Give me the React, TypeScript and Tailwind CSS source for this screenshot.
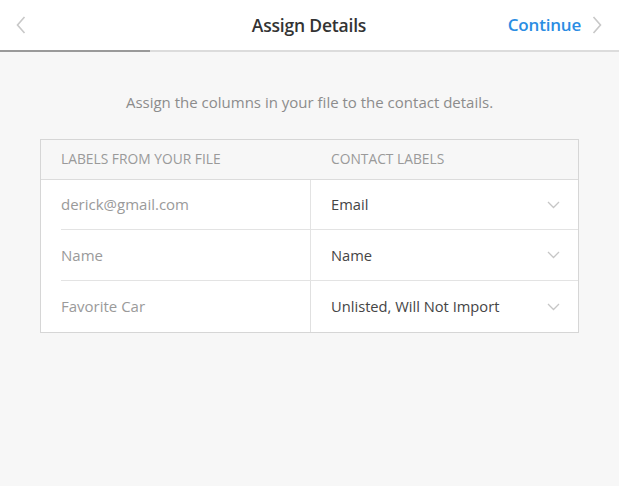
const rows = [
  { file: 'derick@gmail.com', label: 'Email' },
  { file: 'Name', label: 'Name' },
  { file: 'Favorite Car', label: 'Unlisted, Will Not Import' },
];

function NavChevron({ dir }: { dir: 'left' | 'right' }) {
  return (
    <svg width="10" height="18" viewBox="0 0 10 18" fill="none" stroke="#c8c8c8" strokeWidth="1.6">
      {dir === 'left' ? <polyline points="8.5,1 1.5,9 8.5,17" /> : <polyline points="1.5,1 8.5,9 1.5,17" />}
    </svg>
  );
}

function DropChevron() {
  return (
    <svg width="13" height="8" viewBox="0 0 13 8" fill="none" stroke="#c6c6c6" strokeWidth="1.3">
      <polyline points="1,1 6.5,6.5 12,1" />
    </svg>
  );
}

export default function App() {
  return (
    <div className="w-[619px] h-[486px] bg-[#f7f7f7] font-['Open_Sans',sans-serif] overflow-hidden">
      {/* Top bar */}
      <div className="h-[50px] bg-white grid grid-cols-[1fr_auto_1fr] items-center pl-[16px] pr-[17px]">
        <NavChevron dir="left" />
        <div className="text-[17.5px] font-semibold text-[#333] tracking-[-0.2px]">Assign Details</div>
        <div className="flex items-center justify-end gap-[11px]">
          <span className="text-[17px] font-semibold text-[#2b8de3] tracking-[-0.2px]">Continue</span>
          <NavChevron dir="right" />
        </div>
      </div>
      <div className="flex h-[2px]">
        <div className="w-[150px] bg-[#9a9a9a]" />
        <div className="flex-1 bg-[#dcdcdc]" />
      </div>

      <p className="text-center text-[15px] text-[#8c8c8c] mt-[40px] leading-[20px]">
        Assign the columns in your file to the contact details.
      </p>

      {/* Table */}
      <div className="mx-[40px] mt-[27px] border border-[#d6d6d6] bg-white">
        <div className="flex h-[40px] bg-[#f7f7f7] border-b border-[#dcdcdc] text-[13.8px] text-[#9a9a9a] uppercase">
          <div className="w-[269px] flex items-center pl-[20px]">Labels from your file</div>
          <div className="flex-1 flex items-center pl-[21px]">Contact labels</div>
        </div>
        {rows.map((r, i) => (
          <div key={r.file} className={`flex ${i === 0 ? 'h-[50px]' : 'h-[51px]'}`}>
            <div className="w-[269px] pl-[20px]">
              <div
                className={`h-full flex items-center text-[15px] text-[#9a9a9a] ${
                  i < rows.length - 1 ? 'border-b border-[#e3e3e3]' : ''
                }`}
              >
                {r.file}
              </div>
            </div>
            <div
              className={`flex-1 flex items-center justify-between pl-[20px] pr-[18px] border-l border-[#e0e0e0] text-[14.7px] text-[#454545] ${
                i < rows.length - 1 ? 'border-b border-[#e3e3e3]' : ''
              }`}
            >
              <span>{r.label}</span>
              <DropChevron />
            </div>
          </div>
        ))}
      </div>
    </div>
  );
}
